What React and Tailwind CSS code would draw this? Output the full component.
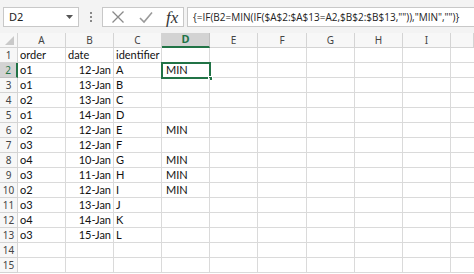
import React from "react";

const rows = [
  ["order", "date", "identifier", ""],
  ["o1", "12-Jan", "A", "MIN"],
  ["o1", "13-Jan", "B", ""],
  ["o2", "13-Jan", "C", ""],
  ["o1", "14-Jan", "D", ""],
  ["o2", "12-Jan", "E", "MIN"],
  ["o3", "12-Jan", "F", ""],
  ["o4", "10-Jan", "G", "MIN"],
  ["o3", "11-Jan", "H", "MIN"],
  ["o2", "12-Jan", "I", "MIN"],
  ["o3", "13-Jan", "J", ""],
  ["o4", "14-Jan", "K", ""],
  ["o3", "15-Jan", "L", ""],
  ["", "", "", ""],
  ["", "", "", ""],
];

const cols = ["A", "B", "C", "D", "E", "F", "G", "H", "I", ""];

export default function App() {
  return (
    <div className="w-[474px] h-[274px] overflow-hidden bg-white font-['Lato',sans-serif]">
      {/* Formula bar */}
      <div className="h-[33px] bg-[#f3f3f3] flex items-start pt-[7px]">
        <div className="ml-[3px] w-[76px] h-[20px] bg-white border border-[#c8c8c8] flex items-center justify-between pl-[5px] pr-[5px]">
          <span className="text-[11px] text-[#222] font-['Noto_Sans',sans-serif]">D2</span>
          <svg width="7" height="4" viewBox="0 0 7 4"><path d="M0 0h7L3.5 4z" fill="#555" /></svg>
        </div>
        <div className="w-[23px] h-[20px] flex flex-col items-center justify-center gap-[2px]">
          <div className="w-[2px] h-[2px] bg-[#888]" />
          <div className="w-[2px] h-[2px] bg-[#888]" />
          <div className="w-[2px] h-[2px] bg-[#888]" />
        </div>
        <div className="w-[82px] h-[20px] bg-white border border-[#c8c8c8] flex items-center">
          <svg className="ml-[8px]" width="14" height="14" viewBox="0 0 14 14">
            <path d="M1.5 1.5L12.5 12.5M12.5 1.5L1.5 12.5" stroke="#8a8a8a" strokeWidth="1.3" fill="none" />
          </svg>
          <svg className="ml-[14px]" width="14" height="13" viewBox="0 0 14 13">
            <path d="M1 7L5 11L13 1.5" stroke="#9a9a9a" strokeWidth="1.6" fill="none" />
          </svg>
          <span className="ml-[13px] text-[17px] leading-none italic font-['Liberation_Serif',serif] text-[#333]">fx</span>
        </div>
        <div className="ml-[3px] flex-1 h-[20px] bg-white border border-[#c8c8c8] border-r-0 flex items-center pl-[5px]">
          <span className="text-[10px] text-[#222] whitespace-nowrap font-['Open_Sans',sans-serif]">
            {'{=IF(B2=MIN(IF($A$2:$A$13=A2,$B$2:$B$13,"")),"MIN","")}'}
          </span>
        </div>
      </div>

      {/* Grid */}
      <div className="grid grid-cols-[18px_48px_48px_48px_48px_48px_49px_48px_48px_48px_1fr] auto-rows-[15px]">
        <div className="bg-[#f7f7f7] border-r border-b border-[#d4d4d4] relative">
          <svg className="absolute right-[3px] bottom-[2px]" width="9" height="9" viewBox="0 0 9 9">
            <path d="M9 0V9H0z" fill="#c9c9c9" />
          </svg>
        </div>
        {cols.map((c, i) =>
          c === "D" ? (
            <div key={i} className="bg-[#d3d3d3] border-r border-[#c0c0c0] border-b-2 border-b-[#217346] flex items-center justify-center text-[11px] font-bold text-[#217346] font-['Noto_Sans',sans-serif]">
              {c}
            </div>
          ) : (
            <div key={i} className="bg-[#f7f7f7] border-r border-b border-[#d4d4d4] flex items-center justify-center text-[10px] text-[#444] font-['Noto_Sans',sans-serif]">
              {c}
            </div>
          )
        )}
        {rows.map((r, ri) => (
          <React.Fragment key={ri}>
            {ri === 1 ? (
              <div className="bg-[#d3d3d3] border-r-2 border-r-[#217346] border-b border-[#c0c0c0] flex items-center justify-center text-[10px] text-[#217346] font-['Noto_Sans',sans-serif]">
                {ri + 1}
              </div>
            ) : (
              <div className="bg-[#f7f7f7] border-r border-b border-[#d4d4d4] flex items-center justify-center text-[10px] text-[#444] font-['Noto_Sans',sans-serif]">
                {ri + 1}
              </div>
            )}
            <div className="border-r border-b border-[#dadada] pl-[2px] text-[11px] leading-[14px] text-[#111] whitespace-nowrap">{r[0]}</div>
            <div className={`border-r border-b border-[#dadada] px-[2px] text-[11px] leading-[14px] text-[#111] whitespace-nowrap ${ri === 0 ? "text-left" : "text-right"}`}>{r[1]}</div>
            <div className="border-r border-b border-[#dadada] pl-[2px] text-[11px] leading-[14px] text-[#111] whitespace-nowrap">{r[2]}</div>
            <div className="border-r border-b border-[#dadada] pl-[4px] text-[11px] leading-[14px] text-[#111] whitespace-nowrap relative">
              {r[3]}
              {ri === 1 && (
                <div className="absolute left-[-1px] top-[-1px] w-[50px] h-[17px] border-2 border-[#217346]">
                  <div className="absolute right-[-4px] bottom-[-4px] w-[5px] h-[5px] bg-[#217346] border border-white" />
                </div>
              )}
            </div>
            <div className="border-r border-b border-[#dadada]" />
            <div className="border-r border-b border-[#dadada]" />
            <div className="border-r border-b border-[#dadada]" />
            <div className="border-r border-b border-[#dadada]" />
            <div className="border-r border-b border-[#dadada]" />
            <div className="border-b border-[#dadada]" />
          </React.Fragment>
        ))}
      </div>
    </div>
  );
}
